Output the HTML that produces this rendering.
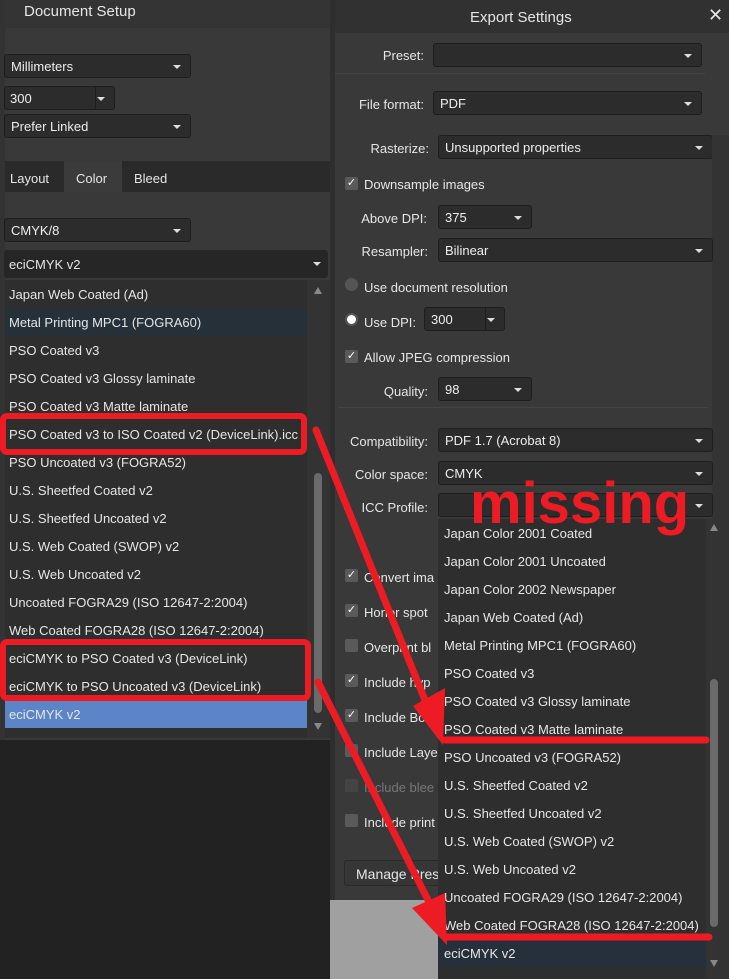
<!DOCTYPE html>
<html><head><meta charset="utf-8"><style>
*{margin:0;padding:0;box-sizing:border-box}
body{width:729px;height:979px;overflow:hidden;background:#222;font-family:"Liberation Sans",sans-serif;font-size:13px;color:#e6e6e6;position:relative}
.a{position:absolute}
.dd{position:absolute;background:#2c2c2c;border:1px solid #1e1e1e;border-radius:3px;height:24px;line-height:24px;padding-left:6px;color:#eee}
.dd:after{content:"";position:absolute;right:9px;top:10px;border-left:4px solid transparent;border-right:4px solid transparent;border-top:4px solid #ddd}
.lbl{position:absolute;text-align:right;color:#e6e6e6}
.cb{position:absolute;width:13px;height:13px;background:#5a5a5a;border-radius:2px;color:#fff;font-size:11px;line-height:13px;text-align:center}
.row{position:absolute;left:0;right:0;height:28px;line-height:30px;padding-left:4px;white-space:nowrap}
</style></head><body>
<div class="a" style="left:0;top:0;width:330px;height:740px;background:#393939"></div>
<div class="a" style="left:0;top:0;width:330px;height:28px;background:#343434"></div>
<div class="a" style="left:24px;top:3px;font-size:15px">Document Setup</div>
<div class="a" style="left:0;top:0;width:5px;height:740px;background:#333"></div>
<div class="dd" style="left:4px;top:54px;width:187px">Millimeters</div>
<div class="dd" style="left:4px;top:86px;width:111px;padding-left:5px">300</div>
<div class="a" style="left:95px;top:87px;width:1px;height:22px;background:#1e1e1e"></div>
<div class="dd" style="left:4px;top:114px;width:187px">Prefer Linked</div>
<div class="a" style="left:5px;top:161px;width:325px;height:31px;background:#2a2a2a"></div>
<div class="a" style="left:64px;top:161px;width:58px;height:31px;background:#3b3b3b"></div>
<div class="a" style="left:10px;top:171px">Layout</div>
<div class="a" style="left:76px;top:171px">Color</div>
<div class="a" style="left:134px;top:171px">Bleed</div>
<div class="dd" style="left:4px;top:218px;width:187px">CMYK/8</div>
<div class="a" style="left:4px;top:250px;width:324px;height:28px;background:#262626;border-radius:3px;line-height:30px;padding-left:5px">eciCMYK v2</div>
<div class="a" style="left:313px;top:262px;border-left:4px solid transparent;border-right:4px solid transparent;border-top:4px solid #ddd"></div>
<div class="a" style="left:5px;top:280px;width:325px;height:458px;background:#2e2e2e">
 <div class="row" style="top:0">Japan Web Coated (Ad)</div>
 <div class="row" style="top:28px;width:302px;background:#263039">Metal Printing MPC1 (FOGRA60)</div>
 <div class="row" style="top:56px">PSO Coated v3</div>
 <div class="row" style="top:84px">PSO Coated v3 Glossy laminate</div>
 <div class="row" style="top:112px">PSO Coated v3 Matte laminate</div>
 <div class="row" style="top:140px;width:300px;overflow:hidden">PSO Coated v3 to ISO Coated v2 (DeviceLink).icc</div>
 <div class="row" style="top:168px">PSO Uncoated v3 (FOGRA52)</div>
 <div class="row" style="top:196px">U.S. Sheetfed Coated v2</div>
 <div class="row" style="top:224px">U.S. Sheetfed Uncoated v2</div>
 <div class="row" style="top:252px">U.S. Web Coated (SWOP) v2</div>
 <div class="row" style="top:280px">U.S. Web Uncoated v2</div>
 <div class="row" style="top:308px">Uncoated FOGRA29 (ISO 12647-2:2004)</div>
 <div class="row" style="top:336px">Web Coated FOGRA28 (ISO 12647-2:2004)</div>
 <div class="row" style="top:364px">eciCMYK to PSO Coated v3 (DeviceLink)</div>
 <div class="row" style="top:392px">eciCMYK to PSO Uncoated v3 (DeviceLink)</div>
 <div class="row" style="top:420px;width:302px;background:#5b85c6">eciCMYK v2</div>
 <div class="a" style="left:302px;top:0;width:23px;height:458px;background:#333"></div>
 <div class="a" style="left:309px;top:193px;width:8px;height:240px;background:#6a6a6a;border-radius:4px"></div>
 <div class="a" style="left:309px;top:7px;border-left:4px solid transparent;border-right:4px solid transparent;border-bottom:7px solid #888"></div>
 <div class="a" style="left:309px;top:443px;border-left:4px solid transparent;border-right:4px solid transparent;border-top:7px solid #888"></div>
</div>
<div class="a" style="left:330px;top:0;width:399px;height:900px;background:#393939"></div>
<div class="a" style="left:330px;top:0;width:399px;height:33px;background:#313131"></div>
<div class="a" style="left:330px;top:0;width:5px;height:900px;background:#2e2e2e"></div>
<div class="a" style="left:470px;top:9px;font-size:15px">Export Settings</div>
<div class="a" style="left:708px;top:5px;font-size:18px">✕</div>
<div class="lbl" style="left:340px;width:84px;top:48px">Preset:</div>
<div class="dd" style="left:433px;top:43px;width:269px"></div>
<div class="a" style="left:335px;top:73px;width:370px;height:1px;background:#444"></div>
<div class="lbl" style="left:340px;width:84px;top:97px">File format:</div>
<div class="dd" style="left:433px;top:91px;width:269px">PDF</div>
<div class="lbl" style="left:340px;width:89px;top:141px">Rasterize:</div>
<div class="dd" style="left:438px;top:135px;width:275px">Unsupported properties</div>
<div class="a" style="left:712px;top:135px;width:17px;height:770px;background:#333"></div>
<div class="cb" style="left:345px;top:177px">✓</div><div class="a" style="left:364px;top:177px">Downsample images</div>
<div class="lbl" style="left:340px;width:87px;top:211px">Above DPI:</div>
<div class="dd" style="left:438px;top:205px;width:94px">375</div>
<div class="lbl" style="left:340px;width:88px;top:244px">Resampler:</div>
<div class="dd" style="left:438px;top:238px;width:275px">Bilinear</div>
<div class="a" style="left:345px;top:278px;width:13px;height:13px;border-radius:50%;background:#555"></div><div class="a" style="left:364px;top:280px">Use document resolution</div>
<div class="a" style="left:345px;top:313px;width:13px;height:13px;border-radius:50%;background:#fff;border:2px solid #555"></div><div class="a" style="left:364px;top:315px">Use DPI:</div>
<div class="dd" style="left:424px;top:307px;width:81px;padding-left:6px">300</div>
<div class="a" style="left:485px;top:308px;width:1px;height:22px;background:#1e1e1e"></div>
<div class="cb" style="left:345px;top:350px">✓</div><div class="a" style="left:364px;top:350px">Allow JPEG compression</div>
<div class="lbl" style="left:340px;width:88px;top:384px">Quality:</div>
<div class="dd" style="left:438px;top:377px;width:94px">98</div>
<div class="a" style="left:338px;top:407px;width:370px;height:1px;background:#444"></div>
<div class="lbl" style="left:340px;width:88px;top:434px">Compatibility:</div>
<div class="dd" style="left:438px;top:428px;width:275px">PDF 1.7 (Acrobat 8)</div>
<div class="lbl" style="left:340px;width:88px;top:467px">Color space:</div>
<div class="dd" style="left:438px;top:461px;width:275px">CMYK</div>
<div class="lbl" style="left:340px;width:88px;top:500px">ICC Profile:</div>
<div class="dd" style="left:438px;top:493px;width:275px"></div>
<div class="cb" style="left:345px;top:569px">✓</div><div class="a" style="left:364px;top:570px">Convert ima</div>
<div class="cb" style="left:345px;top:604px">✓</div><div class="a" style="left:364px;top:605px">Honor spot</div>
<div class="cb" style="left:345px;top:639px"></div><div class="a" style="left:364px;top:640px">Overprint bl</div>
<div class="cb" style="left:345px;top:674px">✓</div><div class="a" style="left:364px;top:675px">Include hyp</div>
<div class="cb" style="left:345px;top:709px">✓</div><div class="a" style="left:364px;top:710px">Include Bo</div>
<div class="cb" style="left:345px;top:744px"></div><div class="a" style="left:364px;top:745px">Include Laye</div>
<div class="cb" style="left:345px;top:779px;background:#444"></div><div class="a" style="left:364px;top:780px;color:#777">Include blee</div>
<div class="cb" style="left:345px;top:814px"></div><div class="a" style="left:364px;top:815px">Include print</div>
<div class="a" style="left:344px;top:860px;width:110px;height:26px;border:1px solid #2a2a2a;border-radius:3px;background:#363636;padding:5px 0 0 11px;font-size:14px">Manage Pres</div>
<div class="a" style="left:330px;top:900px;width:110px;height:79px;background:#a0a0a0"></div>
<div class="a" style="left:438px;top:519px;width:291px;height:460px;background:#2e2e2e">
 <div class="row" style="top:0;padding-left:6px">Japan Color 2001 Coated</div>
 <div class="row" style="top:28px;padding-left:6px">Japan Color 2001 Uncoated</div>
 <div class="row" style="top:56px;padding-left:6px">Japan Color 2002 Newspaper</div>
 <div class="row" style="top:84px;padding-left:6px">Japan Web Coated (Ad)</div>
 <div class="row" style="top:112px;padding-left:6px">Metal Printing MPC1 (FOGRA60)</div>
 <div class="row" style="top:140px;padding-left:6px">PSO Coated v3</div>
 <div class="row" style="top:168px;padding-left:6px">PSO Coated v3 Glossy laminate</div>
 <div class="row" style="top:196px;padding-left:6px">PSO Coated v3 Matte laminate</div>
 <div class="row" style="top:224px;padding-left:6px">PSO Uncoated v3 (FOGRA52)</div>
 <div class="row" style="top:252px;padding-left:6px">U.S. Sheetfed Coated v2</div>
 <div class="row" style="top:280px;padding-left:6px">U.S. Sheetfed Uncoated v2</div>
 <div class="row" style="top:308px;padding-left:6px">U.S. Web Coated (SWOP) v2</div>
 <div class="row" style="top:336px;padding-left:6px">U.S. Web Uncoated v2</div>
 <div class="row" style="top:364px;padding-left:6px">Uncoated FOGRA29 (ISO 12647-2:2004)</div>
 <div class="row" style="top:392px;padding-left:6px">Web Coated FOGRA28 (ISO 12647-2:2004)</div>
 <div class="row" style="top:420px;width:268px;padding-left:6px;background:#26303a">eciCMYK v2</div>
 <div class="a" style="left:268px;top:0;width:23px;height:460px;background:#333"></div>
 <div class="a" style="left:272px;top:160px;width:8px;height:248px;background:#6a6a6a;border-radius:4px"></div>
 <div class="a" style="left:272px;top:5px;border-left:4px solid transparent;border-right:4px solid transparent;border-bottom:7px solid #888"></div>
 <div class="a" style="left:272px;top:441px;border-left:4px solid transparent;border-right:4px solid transparent;border-top:7px solid #888"></div>
</div>
<svg class="a" style="left:0;top:0" width="729" height="979" viewBox="0 0 729 979">
 <g fill="none" stroke="#ed1c24" stroke-width="6" stroke-linejoin="round">
  <rect x="3" y="416" width="301" height="36" rx="4"/>
  <rect x="3" y="642" width="305" height="56" rx="4"/>
 </g>
 <g stroke="#ed1c24" stroke-width="7" stroke-linecap="round">
  <line x1="316" y1="430" x2="425" y2="700"/>
  <line x1="318" y1="682" x2="428" y2="900"/>
  <line x1="445" y1="740" x2="706" y2="740"/>
  <line x1="445" y1="937" x2="709" y2="937"/>
 </g>
 <polygon fill="#ed1c24" points="413,706 445,688 443,745"/>
 <polygon fill="#ed1c24" points="412,908 445,893 447,945"/>
 <text x="470" y="523" font-family="Liberation Sans, sans-serif" font-weight="bold" font-size="58" fill="#ed1c24">missing</text>
</svg>
</body></html>
